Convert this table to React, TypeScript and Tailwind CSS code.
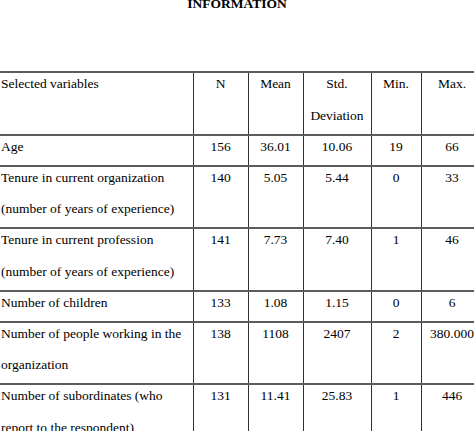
const rows: { label: string[]; n: string; mean: string; sd: string; min: string; max: string }[] = [
  { label: ["Age"], n: "156", mean: "36.01", sd: "10.06", min: "19", max: "66" },
  {
    label: ["Tenure in current organization", "(number of years of experience)"],
    n: "140",
    mean: "5.05",
    sd: "5.44",
    min: "0",
    max: "33",
  },
  {
    label: ["Tenure in current profession", "(number of years of experience)"],
    n: "141",
    mean: "7.73",
    sd: "7.40",
    min: "1",
    max: "46",
  },
  { label: ["Number of children"], n: "133", mean: "1.08", sd: "1.15", min: "0", max: "6" },
  {
    label: ["Number of people working in the", "organization"],
    n: "138",
    mean: "1108",
    sd: "2407",
    min: "2",
    max: "380.000",
  },
  {
    label: ["Number of subordinates (who", "report to the respondent)"],
    n: "131",
    mean: "11.41",
    sd: "25.83",
    min: "1",
    max: "446",
  },
];

const cell = "border-y-2 border-x-[1.5px] border-y-[#5c5c5c] border-x-[#333333] align-top p-0 pb-[2.5px]";

function Cell({ children, left = false }: { children: React.ReactNode; left?: boolean }) {
  return (
    <td className={`${cell} ${left ? "text-left pl-[1px] border-l-0" : "text-center"}`}>
      <div className="-mt-[5px] whitespace-nowrap">{children}</div>
    </td>
  );
}

export default function App() {
  return (
    <div
      className="w-[474px] h-[431px] overflow-hidden bg-white text-black"
      style={{ fontFamily: '"Liberation Serif", "Times New Roman", serif' }}
    >
      <div className="text-center text-[13.5px] font-bold leading-[15px] -mt-[4px]">INFORMATION</div>
      <table className="table-fixed border-collapse mt-[60px] w-[483px] text-[13.5px] leading-[31.5px]">
        <colgroup>
          <col className="w-[193px]" />
          <col className="w-[55px]" />
          <col className="w-[55px]" />
          <col className="w-[68px]" />
          <col className="w-[50px]" />
          <col className="w-[62px]" />
        </colgroup>
        <thead className="font-normal">
          <tr>
            <Cell left>Selected variables</Cell>
            <Cell>N</Cell>
            <Cell>Mean</Cell>
            <Cell>
              Std.
              <br />
              Deviation
            </Cell>
            <Cell>Min.</Cell>
            <Cell>Max.</Cell>
          </tr>
        </thead>
        <tbody>
          {rows.map((r) => (
            <tr key={r.label[0]}>
              <Cell left>
                {r.label.map((l, i) => (
                  <div key={i}>{l}</div>
                ))}
              </Cell>
              <Cell>{r.n}</Cell>
              <Cell>{r.mean}</Cell>
              <Cell>{r.sd}</Cell>
              <Cell>{r.min}</Cell>
              <Cell>{r.max}</Cell>
            </tr>
          ))}
        </tbody>
      </table>
    </div>
  );
}
